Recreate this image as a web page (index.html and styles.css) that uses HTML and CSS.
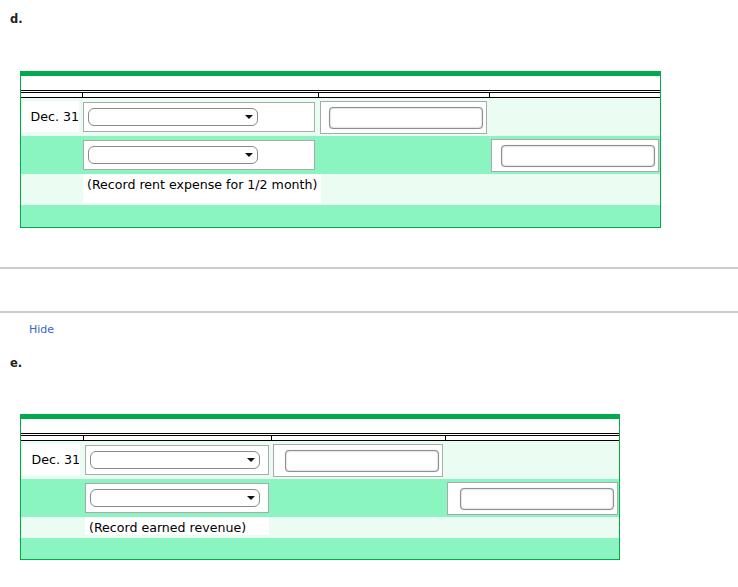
FILE: index.html
```html
<!DOCTYPE html>
<html lang="en">
<head>
<meta charset="utf-8">
<title>Journal entries</title>
<link rel="stylesheet" href="styles.css">
</head>
<body>
<div class="page">
  <div class="part-label">d.</div>
  <div class="jtable jtable--d">
    <div class="jtable__title"></div>
    <div class="jhead"><div></div><div></div><div></div><div></div></div>
    <div class="jrow jrow--entry jrow--light">
      <div class="cell"><div class="date-box">Dec. 31</div></div>
      <div class="cell"><div class="field field--select"><span class="sel"><select aria-label="Account"><option></option></select></span></div></div>
      <div class="cell"><div class="field field--amount"><input type="text" class="amount" aria-label="Debit"></div></div>
      <div class="cell"></div>
    </div>
    <div class="jrow jrow--entry jrow--dark">
      <div class="cell"></div>
      <div class="cell"><div class="field field--select"><span class="sel"><select aria-label="Account"><option></option></select></span></div></div>
      <div class="cell"></div>
      <div class="cell"><div class="field field--amount field--credit"><input type="text" class="amount" aria-label="Credit"></div></div>
    </div>
    <div class="jrow jrow--note jrow--light">
      <div class="cell"></div>
      <div class="cell"><div class="note-box">(Record rent expense for 1/2 month)</div></div>
      <div class="cell"></div>
      <div class="cell"></div>
    </div>
    <div class="jrow jrow--end jrow--dark">
      <div class="cell"></div><div class="cell"></div><div class="cell"></div><div class="cell"></div>
    </div>
  </div>

  <div class="sep sep--first"></div>
  <div class="sep sep--second"></div>

  <a class="hide-link" href="#">Hide</a>

  <div class="part-label part-label--e">e.</div>
  <div class="jtable jtable--e">
    <div class="jtable__title"></div>
    <div class="jhead"><div></div><div></div><div></div><div></div></div>
    <div class="jrow jrow--entry jrow--light">
      <div class="cell"><div class="date-box">Dec. 31</div></div>
      <div class="cell"><div class="field field--select"><span class="sel"><select aria-label="Account"><option></option></select></span></div></div>
      <div class="cell"><div class="field field--amount"><input type="text" class="amount" aria-label="Debit"></div></div>
      <div class="cell"></div>
    </div>
    <div class="jrow jrow--entry jrow--dark">
      <div class="cell"></div>
      <div class="cell"><div class="field field--select"><span class="sel"><select aria-label="Account"><option></option></select></span></div></div>
      <div class="cell"></div>
      <div class="cell"><div class="field field--amount field--credit"><input type="text" class="amount" aria-label="Credit"></div></div>
    </div>
    <div class="jrow jrow--note jrow--light">
      <div class="cell"></div>
      <div class="cell"><div class="note-box">(Record earned revenue)</div></div>
      <div class="cell"></div>
      <div class="cell"></div>
    </div>
    <div class="jrow jrow--end jrow--dark">
      <div class="cell"></div><div class="cell"></div><div class="cell"></div><div class="cell"></div>
    </div>
  </div>
</div>
</body>
</html>
```

FILE: styles.css
```css
* { box-sizing: border-box; }

body {
  margin: 0;
  background: #fff;
  color: #000;
  font-family: "DejaVu Sans", Verdana, sans-serif;
}

.page {
  padding-top: 12px;
}

.part-label {
  margin-left: 10px;
  font-size: 11.5px;
  line-height: 14px;
  font-weight: bold;
  color: #222;
}

.part-label--e {
  margin-top: 19px;
}

/* journal table */
.jtable {
  margin-left: 20px;
  border: 1px solid #00ab4e;
  border-top: 5px solid #00ab4e;
  background: #fff;
}

.jtable--d {
  width: 641px;
  margin-top: 45px;
  --cols: 61px 236px 171px 171px;
  --sel-ml: 1px;
  --sel-mr: 3px;
  --note-h: 31px;
  --note-pt: 3px;
  --note-mb: 2px;
  --end-h: 22px;
}

.jtable--e {
  width: 600px;
  margin-top: 44px;
  --cols: 62px 188px 174px 174px;
  --sel-ml: 2px;
  --sel-mr: 2px;
  --note-h: 21px;
  --note-pt: 3px;
  --note-mb: 3px;
  --end-h: 21px;
}

.jtable__title {
  height: 14px;
}

.jhead {
  display: grid;
  grid-template-columns: var(--cols);
  border-top: 1px solid #000;
  padding-top: 1px;
}

.jhead > div {
  height: 6px;
  border-top: 1px solid #000;
  border-bottom: 1px solid #000;
}

.jhead > div + div {
  border-left: 1px solid #000;
}

.jrow {
  display: grid;
  grid-template-columns: var(--cols);
}

.jrow--light { background: #ebfcf2; }
.jrow--dark { background: #8af5c0; }

.jrow--entry { height: 38px; }
.jrow--note { height: var(--note-h); }
.jrow--end { height: var(--end-h); }

.cell {
  display: flex;
  align-items: center;
  min-width: 0;
}

.date-box {
  align-self: stretch;
  flex: 1;
  margin: 3px 3px 4px 2px;
  background: #fff;
  display: flex;
  align-items: center;
  justify-content: flex-end;
  font-size: 12.6px;
  line-height: 15px;
}

.field {
  flex: 1;
  background: #fff;
  border: 1px solid #aaa;
}

.field--select {
  margin: 0 var(--sel-mr) 0 var(--sel-ml);
  padding: 5px 4px;
  display: flex;
}

.field--amount {
  margin: 0 2px;
  padding: 5px 3px 4px;
  display: flex;
  justify-content: flex-end;
}

.field--credit {
  margin-right: 1px;
}

.sel {
  position: relative;
  display: block;
  width: 170px;
  height: 18px;
}

.sel select {
  -webkit-appearance: none;
  appearance: none;
  display: block;
  width: 170px;
  height: 18px;
  margin: 0;
  padding: 0 16px 0 4px;
  border: 1px solid #8a8a8a;
  border-radius: 6px;
  background: #fff;
  font-family: "DejaVu Sans", Verdana, sans-serif;
  font-size: 12px;
}

.sel::after {
  content: "";
  position: absolute;
  right: 5px;
  top: 7px;
  width: 0;
  height: 0;
  border-style: solid;
  border-width: 4px 4px 0 4px;
  border-color: #111 transparent transparent transparent;
  pointer-events: none;
}

.amount {
  display: block;
  width: 154px;
  height: 22px;
  margin: 0;
  padding: 0 4px;
  border: 1px solid #8f8f8f;
  border-radius: 4px;
  background: #fff;
  box-shadow: inset 0 0 2px rgba(0, 0, 0, 0.35), 0 0 1px rgba(0, 0, 0, 0.25);
  font-family: "DejaVu Sans", Verdana, sans-serif;
  font-size: 12px;
}

.note-box {
  align-self: stretch;
  flex: 1;
  margin: 0 var(--sel-mr) var(--note-mb) var(--sel-ml);
  padding: var(--note-pt) 4px 0 4px;
  background: #fff;
  font-size: 12.6px;
  line-height: 15px;
  white-space: nowrap;
}

/* separators */
.sep {
  height: 2px;
  background: #cccccc;
}

.sep--first { margin-top: 39px; }
.sep--second { margin-top: 42px; }

.hide-link {
  display: block;
  width: max-content;
  margin: 10px 0 0 29px;
  font-size: 11px;
  line-height: 14px;
  color: #3366cc;
  text-decoration: none;
}
```
